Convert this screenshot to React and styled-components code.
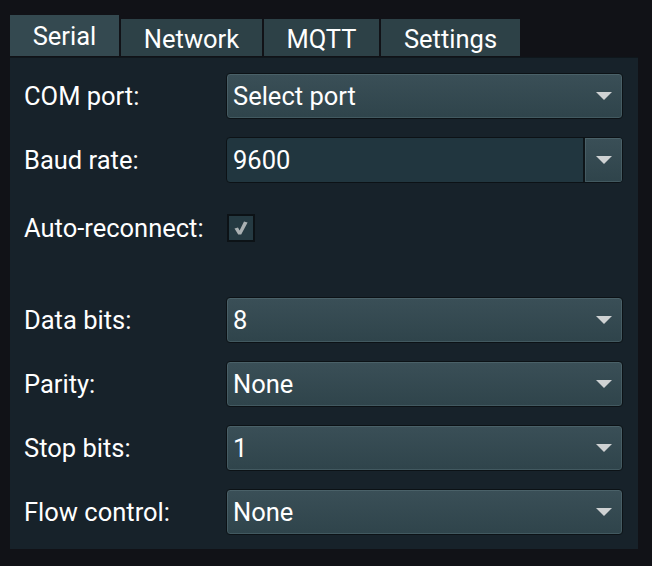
import styled, { createGlobalStyle } from "styled-components";

const GlobalStyle = createGlobalStyle`
	html, body {
		margin: 0;
		padding: 0;
		background: #111217;
	}
	body {
		font-family: Roboto, "Liberation Sans", sans-serif;
		color: #ffffff;
	}
`;

const Page = styled.div`
	width: 652px;
	height: 566px;
	padding: 15px 14px 0 10px;
	box-sizing: border-box;
	display: flex;
	flex-direction: column;
`;

const TabBar = styled.div`
	display: flex;
	align-items: flex-end;
	gap: 2px;
	height: 41px;
`;

const Tab = styled.div`
	width: ${(p) => p.$w}px;
	height: ${(p) => (p.$active ? "41px" : "37px")};
	box-sizing: border-box;
	display: flex;
	align-items: center;
	justify-content: center;
	background: ${(p) => (p.$active ? "#344950" : "#2d4147")};
	font-size: 25.5px;
	color: #ffffff;
	padding-top: ${(p) => (p.$active ? "0" : "2px")};
`;

const Panel = styled.div`
	width: 628px;
	height: 492px;
	box-sizing: border-box;
	margin-top: 1px;
	background: #17222a;
	border-top: 1px solid #0f171c;
	padding: 15px 15px 0 14px;
	display: grid;
	grid-template-columns: 202px 1fr;
	grid-auto-rows: auto;
	row-gap: 18px;
	align-content: start;
`;

const Label = styled.div`
	display: flex;
	align-items: center;
	font-size: 25.5px;
	color: #ffffff;
	height: ${(p) => p.$h || 46}px;
`;

const Spacer = styled.div`
	grid-column: 1 / span 2;
	height: 6px;
`;

const Combo = styled.div`
	height: 46px;
	box-sizing: border-box;
	border: 1px solid #0c1216;
	border-radius: 4px;
	background: linear-gradient(#3a4f57, #2f444b);
	box-shadow: inset 0 0 0 1px rgba(120, 145, 152, 0.28);
	display: flex;
	align-items: center;
	padding: 0 10px 0 6px;
	font-size: 25.5px;
	color: #ffffff;
`;

const ComboText = styled.span`
	flex: 1;
`;

const EditCombo = styled.div`
	height: 46px;
	box-sizing: border-box;
	border: 1px solid #0c1216;
	border-radius: 4px;
	background: #21363f;
	display: flex;
	overflow: hidden;
`;

const EditField = styled.div`
	flex: 1;
	display: flex;
	align-items: center;
	padding-left: 6px;
	font-size: 25.5px;
	color: #ffffff;
	border-right: 2px solid #0e1519;
`;

const DropButton = styled.div`
	width: 37px;
	display: flex;
	align-items: center;
	justify-content: center;
	background: linear-gradient(#3a4f57, #2f444b);
	box-shadow: inset 0 0 0 1px rgba(120, 145, 152, 0.28);
`;

const Arrow = styled.span`
	width: 0;
	height: 0;
	border-left: 8px solid transparent;
	border-right: 8px solid transparent;
	border-top: 8px solid #cfd2d3;
`;

const CheckCell = styled.div`
	display: flex;
	align-items: center;
	height: 54px;
`;

const CheckBox = styled.div`
	width: 28px;
	height: 28px;
	margin-left: 1px;
	box-sizing: border-box;
	border: 2px solid #0c1216;
	background: #253a42;
	display: flex;
	align-items: center;
	justify-content: center;
`;

const SelectRow = ({ label, value }) => (
	<>
		<Label>{label}</Label>
		<Combo>
			<ComboText>{value}</ComboText>
			<Arrow />
		</Combo>
	</>
);

const App = () => {
	return (
		<>
			<GlobalStyle />
			<Page>
				<TabBar>
					<Tab $active $w={109}>Serial</Tab>
					<Tab $w={141}>Network</Tab>
					<Tab $w={115}>MQTT</Tab>
					<Tab $w={139}>Settings</Tab>
				</TabBar>
				<Panel>
					<SelectRow label="COM port:" value="Select port" />
					<Label>Baud rate:</Label>
					<EditCombo>
						<EditField>9600</EditField>
						<DropButton>
							<Arrow />
						</DropButton>
					</EditCombo>
					<Label $h={54}>Auto-reconnect:</Label>
					<CheckCell>
						<CheckBox>
							<svg width="14" height="14" viewBox="0 0 14 14">
								<path
									d="M0.5 7.6 L4 6.6 L5.6 9.6 L10 0.4 L13.6 1.4 L7.2 13.6 L4.2 13.6 Z"
									fill="#aab1b3"
								/>
							</svg>
						</CheckBox>
					</CheckCell>
					<Spacer />
					<SelectRow label="Data bits:" value="8" />
					<SelectRow label="Parity:" value="None" />
					<SelectRow label="Stop bits:" value="1" />
					<SelectRow label="Flow control:" value="None" />
				</Panel>
			</Page>
		</>
	);
};

export default App;
